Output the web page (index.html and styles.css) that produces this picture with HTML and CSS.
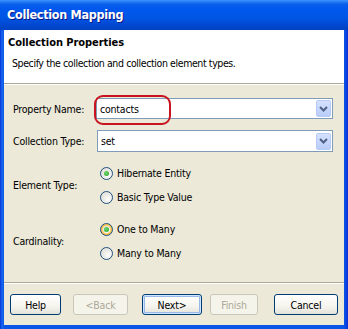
FILE: index.html
```html
<!DOCTYPE html>
<html>
<head>
<meta charset="utf-8">
<link rel="stylesheet" href="styles.css">
</head>
<body>
<div class="window">
  <div class="titlebar"><span class="title">Collection Mapping</span></div>
  <div class="client">
    <div class="header">
      <div class="h-title">Collection Properties</div>
      <div class="h-desc">Specify the collection and collection element types.</div>
    </div>
    <div class="body">
      <div class="form">
        <div class="label">Property Name:</div>
        <div class="combo">
          <span class="combo-text">contacts</span>
          <span class="combo-btn"><svg width="9" height="6" viewBox="0 0 9 6"><path d="M1 1 L4.5 4.5 L8 1" fill="none" stroke="#4d6185" stroke-width="2"/></svg></span>
          <span class="highlight"></span>
        </div>
        <div class="label r2">Collection Type:</div>
        <div class="combo combo2 r2">
          <span class="combo-text">set</span>
          <span class="combo-btn"><svg width="9" height="6" viewBox="0 0 9 6"><path d="M1 1 L4.5 4.5 L8 1" fill="none" stroke="#4d6185" stroke-width="2"/></svg></span>
        </div>
        <div class="label r3">Element Type:</div>
        <div class="radios r3">
          <div class="radio-row"><span class="radio checked"></span><span>Hibernate Entity</span></div>
          <div class="radio-row"><span class="radio"></span><span>Basic Type Value</span></div>
        </div>
        <div class="label r4">Cardinality:</div>
        <div class="radios r4">
          <div class="radio-row"><span class="radio checked focus"></span><span>One to Many</span></div>
          <div class="radio-row"><span class="radio"></span><span>Many to Many</span></div>
        </div>
      </div>
      <div class="sep"></div>
      <div class="buttons">
        <button class="btn b-help">Help</button>
        <button class="btn b-back disabled">&lt;Back</button>
        <button class="btn b-next default">Next&gt;</button>
        <button class="btn b-finish disabled">Finish</button>
        <button class="btn b-cancel">Cancel</button>
      </div>
    </div>
  </div>
</div>
</body>
</html>
```
FILE: styles.css
```css
* { box-sizing: border-box; }
html, body { margin: 0; padding: 0; background: #fff; }
body { font-family: "DejaVu Sans Condensed", "DejaVu Sans", Verdana, sans-serif; font-size: 11px; color: #000; }

.window {
  width: 348px;
  height: 329px;
  background: linear-gradient(to right, #0831d9 0, #166aee 2px, #0a56e6 4px, #0a56e6 344px, #0831d9 348px);
  display: flex;
  flex-direction: column;
}

.titlebar {
  height: 30px;
  background: linear-gradient(to bottom, #3d95ff 0, #0a5fe9 4px, #0058ee 8px, #0055e5 18px, #0246cd 26px, #0042c0 30px);
  display: flex;
  align-items: center;
  padding-left: 7px;
  padding-bottom: 2px;
}
.title {
  color: #fff;
  font-family: "DejaVu Sans Condensed", "DejaVu Sans", Verdana, sans-serif;
  font-weight: bold;
  font-size: 12.5px;
  letter-spacing: -0.3px;
  text-shadow: 1px 1px 0 #0a1883;
}

.client {
  margin: 0 4px 4px 4px;
  flex: 1;
  display: flex;
  flex-direction: column;
  background: #ece9d8;
}

.header {
  height: 54px;
  background: #fff;
  border-bottom: 1px solid #aca899;
  box-shadow: 0 1px 0 #fff;
  padding: 6px 0 0 4px;
}
.h-title {
  font-weight: bold;
  font-size: 11px;
  line-height: 14px;
  letter-spacing: -0.05px;
}
.h-desc {
  margin-top: 6px;
  padding-left: 4px;
  font-size: 10.5px;
  line-height: 14px;
  letter-spacing: -0.4px;
}

.body {
  flex: 1;
  display: flex;
  flex-direction: column;
}

.form {
  display: grid;
  grid-template-columns: 83px 237px;
  padding: 14px 0 0 9px;
  font-size: 10.5px;
  letter-spacing: -0.2px;
}
.label {
  display: flex;
  align-items: center;
}
.r2 { margin-top: 11px; }
.r3 { margin-top: 9px; }
.r4 { margin-top: 8px; }

.combo {
  position: relative;
  height: 21px;
  border: 1px solid #7f9db9;
  background: #fff;
  display: flex;
  align-items: center;
}
.combo2 { height: 22px; margin-left: 1px; }
.combo-text { flex: 1; padding-left: 3px; }
.combo-btn {
  width: 15px;
  height: 17px;
  margin-right: 1px;
  border-radius: 2px;
  background: linear-gradient(to bottom, #d4e0fd, #b9cdf9);
  border: 1px solid #b8cbf6;
  display: flex;
  align-items: center;
  justify-content: center;
}
.highlight {
  position: absolute;
  left: -3px;
  top: -4px;
  width: 77px;
  height: 30px;
  border: 2px solid #c8141e;
  border-radius: 9px;
}

.radios {
  display: flex;
  flex-direction: column;
}
.radio-row {
  height: 24px;
  display: flex;
  align-items: center;
  gap: 4px;
  padding-left: 4px;
}
.radio {
  width: 13px;
  height: 13px;
  border-radius: 50%;
  border: 1px solid #1c5180;
  background: radial-gradient(circle at 65% 65%, #ffffff 0, #ecebe6 45%, #dcd9cf 100%);
  position: relative;
}
.radio.checked::after {
  content: "";
  position: absolute;
  left: 3px;
  top: 3px;
  width: 5px;
  height: 5px;
  border-radius: 50%;
  background: radial-gradient(circle at 40% 40%, #6fd86f, #21a121);
}
.radio.focus {
  box-shadow: inset 0 0 0 1px #f8b636, inset 0 0 0 2px #fdd889;
}

.sep {
  margin: auto 0 0 0;
  height: 2px;
  border-top: 1px solid #aca899;
  border-bottom: 1px solid #fff;
}

.buttons {
  display: flex;
  padding: 10px 0 10px 6px;
}
.btn {
  height: 21px;
  font-family: "DejaVu Sans Condensed", "DejaVu Sans", Verdana, sans-serif;
  font-size: 10.5px;
  letter-spacing: -0.2px;
  border: 1px solid #003c74;
  border-radius: 3px;
  background: linear-gradient(to bottom, #ffffff 0, #f5f4ee 60%, #e3e2da 100%);
  color: #000;
  padding: 0;
}
.btn.disabled {
  border-color: #c9c7ba;
  background: #f5f4ea;
  color: #aca899;
}
.btn.default {
  box-shadow: inset 0 0 0 1px #cee7ff, inset 0 0 0 2px #98b8ea;
}
.b-help { width: 51px; margin-right: 12px; }
.b-back { width: 55px; margin-right: 14px; }
.b-next { width: 60px; margin-right: 8px; }
.b-finish { width: 48px; margin-right: 16px; }
.b-cancel { width: 64px; }
```
